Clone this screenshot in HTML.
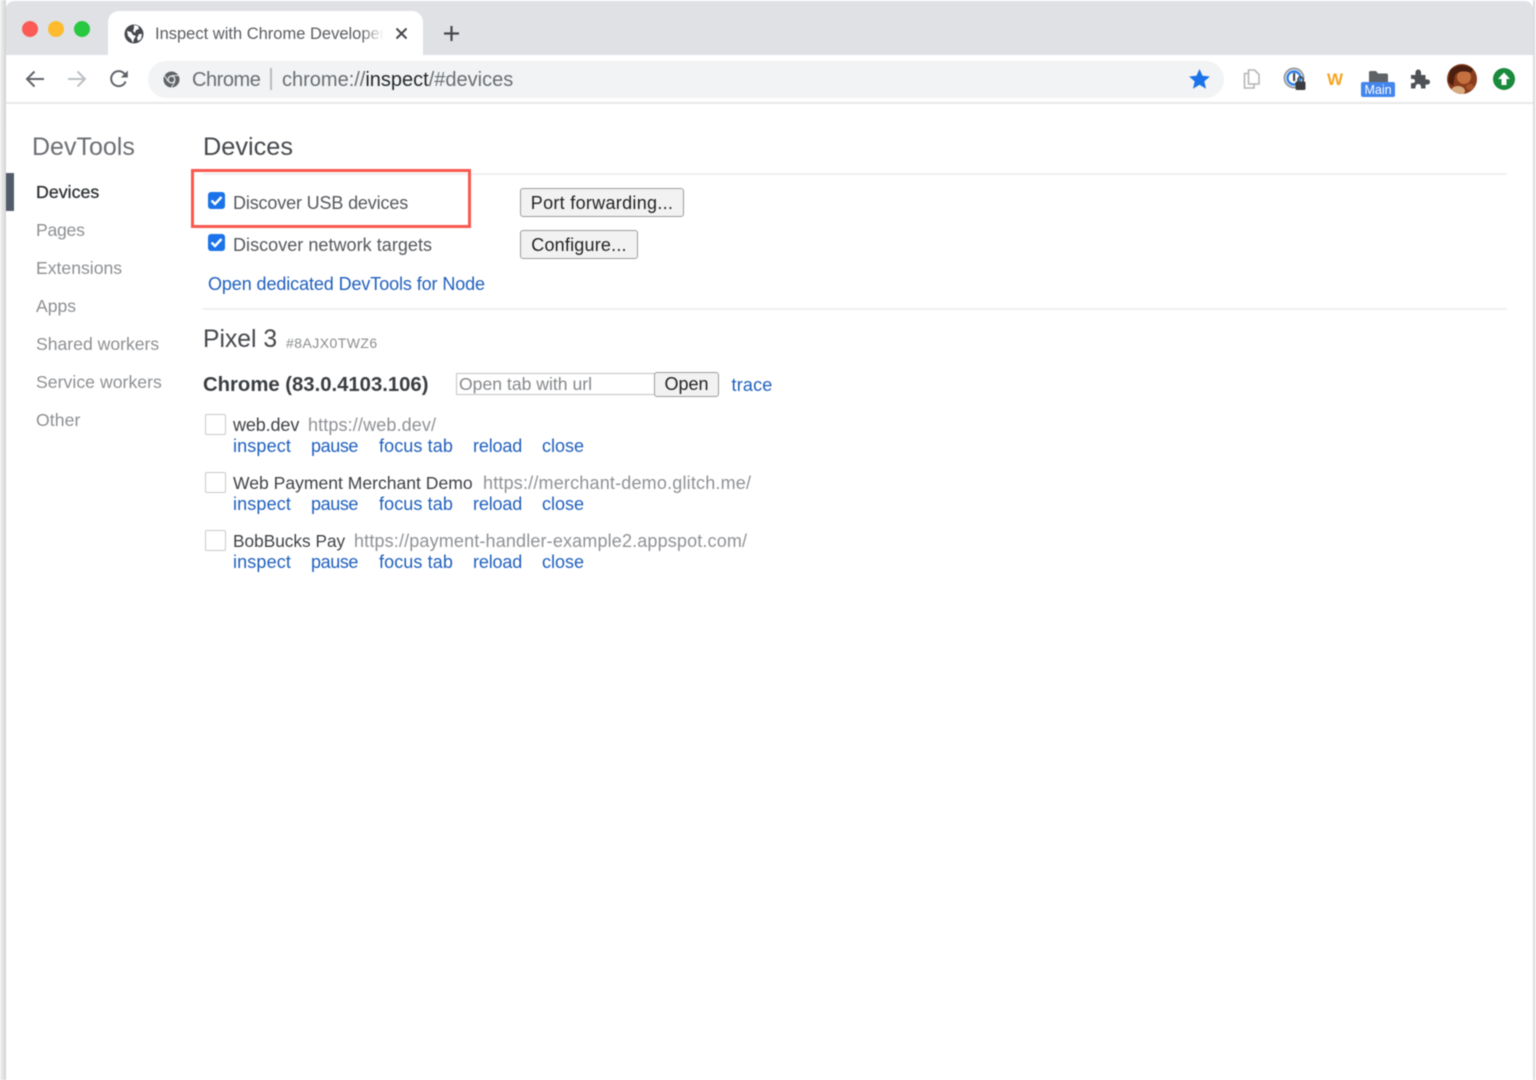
<!DOCTYPE html>
<html><head><meta charset="utf-8"><title>Inspect with Chrome Developer Tools</title>
<style>
html,body{margin:0;padding:0;background:#fff;width:1536px;height:1080px;overflow:hidden}
body{position:relative;font-family:"Liberation Sans",sans-serif}
#wrap{position:absolute;left:0;top:0;width:1536px;height:1080px;filter:blur(.5px)}
.t{position:absolute;white-space:nowrap;line-height:22px;font-size:18px;color:#303942}
.a{color:#1f5fbd}.g{color:#8f9195}.s{color:#8d8f92;font-size:17.6px}.d{color:#55585c}
.abs{position:absolute;box-sizing:border-box}
.btn{position:absolute;box-sizing:border-box;background:#f2f2f2;border:1.5px solid #9d9d9d;border-radius:3px;height:29px;color:#222;font-size:18px;line-height:26px;text-align:center;white-space:nowrap}
.cb{position:absolute;width:17px;height:17px;background:#1a73e8;border-radius:3px}
.ub{position:absolute;width:21px;height:21px;left:205px;box-sizing:border-box;border:1.5px solid #c9c9c9;border-radius:2px;background:#fff}
svg{position:absolute;overflow:visible}
</style></head><body><div id="wrap">
<!-- window edges -->
<div class="abs" style="left:0;top:0;width:6px;height:1080px;background:linear-gradient(90deg,#f3f3f3,#d2d2d2)"></div>
<div class="abs" style="left:1533px;top:0;width:3px;height:1080px;background:linear-gradient(90deg,#d4d4d4,#f4f4f4)"></div>
<!-- tab strip -->
<div class="abs" style="left:6px;top:1px;width:1527px;height:54px;background:#dfe1e5;border-radius:8px 8px 0 0"></div>
<div class="abs" style="left:6px;top:55px;width:1527px;height:49px;background:#fff;border-bottom:2px solid #e8e8e8"></div>
<div class="abs" style="left:22px;top:21px;width:16px;height:16px;border-radius:50%;background:#fb5a55"></div>
<div class="abs" style="left:48px;top:21px;width:16px;height:16px;border-radius:50%;background:#fdbb2d"></div>
<div class="abs" style="left:74px;top:21px;width:16px;height:16px;border-radius:50%;background:#28c840"></div>
<div class="abs" style="left:108px;top:11px;width:315px;height:45px;background:#fff;border-radius:11px 11px 0 0"></div>
<svg style="left:124px;top:24px" width="20" height="20" viewBox="0 0 20 20"><circle cx="10" cy="10" r="9.5" fill="#45484c"/><path d="M3 7l4 1 2 3 3 1-2 3-1 4-2-4-3-3zM10 1l4 1 1 3-3 1-1 3-2-2 1-3zM15 10l3 0-1 5-3 2-1-3z" fill="#fff"/></svg>
<div class="t" style="left:155px;top:23px;font-size:16.5px;color:#5a5d61;width:229px;overflow:hidden;-webkit-mask-image:linear-gradient(90deg,#000 90%,transparent)">Inspect with Chrome Developer Tools</div>
<svg style="left:395px;top:27px" width="13" height="13" viewBox="0 0 13 13"><path d="M1.5 1.5l10 10M11.5 1.5l-10 10" stroke="#45484c" stroke-width="2"/></svg>
<svg style="left:443px;top:25px" width="17" height="17" viewBox="0 0 17 17"><path d="M8.5 1v15M1 8.5h15" stroke="#45484c" stroke-width="2.2"/></svg>
<!-- nav -->
<svg style="left:25px;top:70px" width="20" height="18" viewBox="0 0 20 18"><path d="M19 9H2M9.5 1.5L2 9l7.5 7.5" fill="none" stroke="#5f6368" stroke-width="2"/></svg>
<svg style="left:67px;top:70px" width="20" height="18" viewBox="0 0 20 18"><path d="M1 9h17M10.5 1.5L18 9l-7.5 7.5" fill="none" stroke="#bdc0c4" stroke-width="2"/></svg>
<svg style="left:109px;top:69px" width="20" height="20" viewBox="0 0 20 20"><path d="M16.6 12.5A7.5 7.5 0 1 1 15.3 4.7L18 7" fill="none" stroke="#5f6368" stroke-width="2"/><path d="M18.8 1.5v7h-7z" fill="#5f6368"/></svg>
<!-- omnibox -->
<div class="abs" style="left:148px;top:61px;width:1076px;height:37px;background:#f1f3f4;border-radius:19px"></div>
<svg style="left:163px;top:71px" width="17" height="17" viewBox="0 0 17 17"><circle cx="8.5" cy="8.5" r="8" fill="#5f6368"/><circle cx="8.5" cy="8.5" r="4" fill="#e8e8e8"/><circle cx="8.5" cy="8.5" r="2.7" fill="#5f6368"/><path d="M8.5 4.5h7.2M5 10.5L1.6 4.5M12 10.5l-3.6 6" stroke="#e8e8e8" stroke-width=".9"/></svg>
<div class="t" style="left:192px;top:68.500px;font-size:20px;letter-spacing:-.45px;color:#6a6d71">Chrome</div>
<div class="abs" style="left:270px;top:68px;width:1.5px;height:22px;background:#b8babd"></div>
<div class="t" style="left:282px;top:68.500px;font-size:20px;color:#6a6d71">chrome://<span style="color:#25282b">inspect</span>/#devices</div>
<svg style="left:1189px;top:69px" width="21" height="20" viewBox="0 0 21 20"><path d="M10.5 0l3 6.8 7.4.7-5.6 4.9 1.7 7.3-6.5-3.9L4 19.700l1.700-7.300L.1 7.500l7.400-.7z" fill="#1a73e8"/></svg>
<!-- extensions -->
<svg style="left:1243px;top:69px" width="17" height="20" viewBox="0 0 17 20"><path d="M5.500 1h6l4.500 4.500V15h-10.500z" fill="#fff" stroke="#b4b6b8" stroke-width="1.600"/><path d="M5.500 4.500H1.500V19H11V15" fill="none" stroke="#b4b6b8" stroke-width="1.600"/></svg>
<svg style="left:1283px;top:67px" width="24" height="24" viewBox="0 0 24 24"><circle cx="11" cy="11" r="9.500" fill="none" stroke="#9a9da1" stroke-width="2"/><circle cx="11" cy="11" r="6.500" fill="none" stroke="#2f80e8" stroke-width="2.400"/><rect x="10" y="6" width="2.200" height="8" fill="#45484c"/><rect x="12.500" y="14.500" width="10" height="8.500" rx="1.200" fill="#3a3c3f"/><path d="M15 15v-2.500a2.500 2.500 0 0 1 5 0v2.500" fill="none" stroke="#3a3c3f" stroke-width="1.500"/></svg>
<div class="t" style="left:1327px;top:69px;font-size:17px;font-weight:bold;color:#f5a623">W</div>
<svg style="left:1369px;top:71px" width="19" height="14" viewBox="0 0 19 14"><path d="M0 1.500Q0 0 1.500 0H7l2 2.500h8.500Q19 2.500 19 4v10H0z" fill="#5f6368"/></svg>
<div class="abs" style="left:1361px;top:82px;width:34px;height:15px;background:#4285ec;border-radius:2px;color:#fff;font-size:12.500px;line-height:16px;text-align:center">Main</div>
<svg style="left:1410px;top:69px" width="20" height="20" viewBox="0 0 20 20"><path d="M1 6h4.500C5 2 6.500.5 8.300.5S11.500 2 11 6h4.500v4.500C19 10 20 11.500 20 13s-1 3-4.500 2.500V19.500H11C11.500 16.500 10 15 8.300 15S5.200 16.500 5.500 19.500H1V14C3.500 14.500 5 13.500 5 12S3.500 9.500 1 10z" fill="#4e5155"/></svg>
<svg style="left:1447px;top:64px" width="30" height="30" viewBox="0 0 30 30"><defs><clipPath id="c"><circle cx="15" cy="15" r="15"/></clipPath></defs><g clip-path="url(#c)"><rect width="30" height="30" fill="#8a3d1c"/><ellipse cx="17" cy="13" rx="7" ry="7" fill="#c4703f"/><path d="M3 6Q14-3 26 5L24 9Q14 5 8 11L6 22 1 18z" fill="#4a1f10"/><ellipse cx="11" cy="27" rx="7" ry="5" fill="#d9a97f"/><ellipse cx="23" cy="23" rx="4" ry="3" fill="#a8552c"/></g></svg>
<svg style="left:1493px;top:68px" width="22" height="22" viewBox="0 0 22 22"><circle cx="11" cy="11" r="11" fill="#1a8a3c"/><path d="M11 4.500l6 6.500h-3.500v6h-5v-6H5z" fill="#fff"/></svg>
<!-- sidebar -->
<div class="t" style="left:32px;top:131.500px;font-size:25px;line-height:30px;color:#6b6e72">DevTools</div>
<div class="abs" style="left:6px;top:173px;width:8px;height:38px;background:#515c68"></div>
<div class="t" style="left:36px;top:181px;font-size:17.800px;color:#2a2d30;-webkit-text-stroke:.25px #2a2d30">Devices</div>
<div class="t s" style="left:36px;top:219px;letter-spacing:-.25px">Pages</div>
<div class="t s" style="left:36px;top:257px">Extensions</div>
<div class="t s" style="left:36px;top:295px">Apps</div>
<div class="t s" style="left:36px;top:333px">Shared workers</div>
<div class="t s" style="left:36px;top:371px;letter-spacing:.05px">Service workers</div>
<div class="t s" style="left:36px;top:409px;letter-spacing:.08px">Other</div>
<!-- main -->
<div class="t" style="left:203px;top:131.500px;font-size:25.300px;line-height:30px;color:#45484c">Devices</div>
<div class="abs" style="left:203px;top:173px;width:1304px;height:2px;background:#f0f0f0"></div>
<div class="abs" style="left:191px;top:169px;width:280px;height:59px;border:3px solid #f9584f"></div>
<div class="cb" style="left:208px;top:192px"></div>
<svg style="left:208px;top:192px" width="17" height="17" viewBox="0 0 17 17"><path d="M3.500 8.500l3.500 3.500 6.500-7" fill="none" stroke="#fff" stroke-width="2.400"/></svg>
<div class="t d" style="left:233px;top:192px;letter-spacing:-.15px">Discover USB devices</div>
<div class="cb" style="left:208px;top:234px"></div>
<svg style="left:208px;top:234px" width="17" height="17" viewBox="0 0 17 17"><path d="M3.500 8.500l3.500 3.500 6.500-7" fill="none" stroke="#fff" stroke-width="2.400"/></svg>
<div class="t d" style="left:233px;top:234px;letter-spacing:.04px">Discover network targets</div>
<div class="btn" style="left:520px;top:188px;width:164px;letter-spacing:.3px;line-height:28px">Port forwarding...</div>
<div class="btn" style="left:520px;top:230px;width:118px;letter-spacing:.2px;line-height:28px">Configure...</div>
<div class="t a" style="left:208px;top:273px;letter-spacing:-.1px">Open dedicated DevTools for Node</div>
<div class="abs" style="left:203px;top:308px;width:1304px;height:2px;background:#f0f0f0"></div>
<div class="t" style="left:203px;top:325px;font-size:24.700px;line-height:30px;color:#45484c">Pixel 3</div>
<div class="t" style="left:286px;top:332px;font-size:14px;letter-spacing:.45px;color:#8b8d90">#8AJX0TWZ6</div>
<div class="t" style="left:203px;top:374px;font-size:20.300px;font-weight:bold;color:#3a3d40">Chrome (83.0.4103.106)</div>
<div class="abs" style="left:456px;top:373px;width:200px;height:22px;border:1.500px solid #c4c4c4;background:#fff"></div>
<div class="t" style="left:459px;top:373px;font-size:17.600px;color:#85888b">Open tab with url</div>
<div class="btn" style="left:654px;top:372px;width:65px;height:25px;line-height:22px">Open</div>
<div class="t a" style="left:731.500px;top:374px;letter-spacing:.2px">trace</div>

<div class="ub" style="top:414px"></div>
<div class="t" style="left:233px;top:413.500px;letter-spacing:-.12px;color:#3f4246">web.dev</div>
<div class="t g" style="left:308px;top:413.500px;letter-spacing:.13px">https://web.dev/</div>
<div class="t a" style="left:233px;top:435px;letter-spacing:.14px">inspect</div><div class="t a" style="left:311px;top:435px;letter-spacing:-.4px">pause</div><div class="t a" style="left:379px;top:435px;letter-spacing:.1px">focus tab</div><div class="t a" style="left:473px;top:435px;letter-spacing:-.15px">reload</div><div class="t a" style="left:542px;top:435px">close</div>

<div class="ub" style="top:472px"></div>
<div class="t" style="left:233px;top:471.500px;font-size:17.560px;color:#3f4246">Web Payment Merchant Demo</div>
<div class="t g" style="left:483px;top:471.500px;letter-spacing:.19px">https://merchant-demo.glitch.me/</div>
<div class="t a" style="left:233px;top:493px;letter-spacing:.14px">inspect</div><div class="t a" style="left:311px;top:493px;letter-spacing:-.4px">pause</div><div class="t a" style="left:379px;top:493px;letter-spacing:.1px">focus tab</div><div class="t a" style="left:473px;top:493px;letter-spacing:-.15px">reload</div><div class="t a" style="left:542px;top:493px">close</div>

<div class="ub" style="top:530px"></div>
<div class="t" style="left:233px;top:529.500px;font-size:17.250px;color:#3f4246">BobBucks Pay</div>
<div class="t g" style="left:354px;top:529.500px;letter-spacing:.155px">https://payment-handler-example2.appspot.com/</div>
<div class="t a" style="left:233px;top:550.500px;letter-spacing:.14px">inspect</div><div class="t a" style="left:311px;top:550.500px;letter-spacing:-.4px">pause</div><div class="t a" style="left:379px;top:550.500px;letter-spacing:.1px">focus tab</div><div class="t a" style="left:473px;top:550.500px;letter-spacing:-.15px">reload</div><div class="t a" style="left:542px;top:550.500px">close</div>
</div></body></html>
